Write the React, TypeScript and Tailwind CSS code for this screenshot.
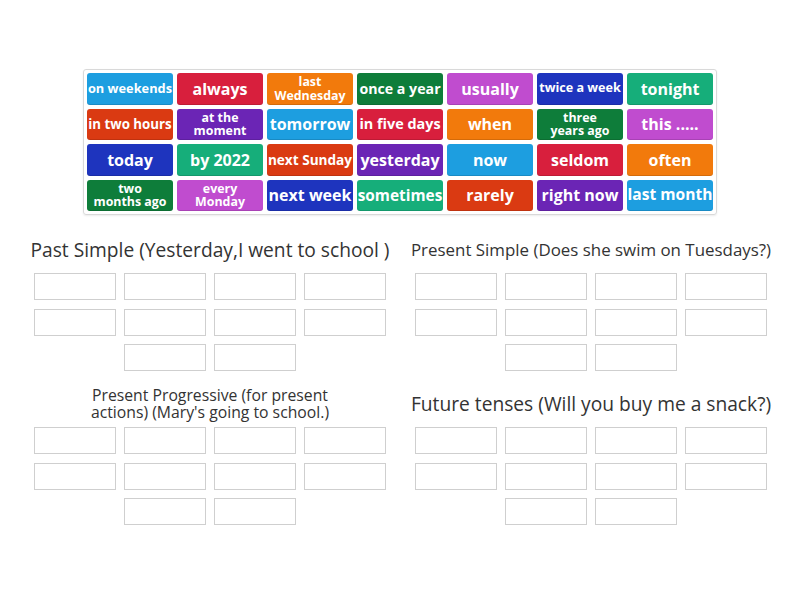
import React from "react";

type Tile = { text: string; size: number; two?: boolean };

const COLORS = [
  "bg-[#1d9ee0]",
  "bg-[#d81f3d]",
  "bg-[#f27a0c]",
  "bg-[#0e7d3a]",
  "bg-[#c04ccf]",
  "bg-[#1e34be]",
  "bg-[#16ae7a]",
  "bg-[#da3a12]",
  "bg-[#6b25b5]",
];

const TILES: Tile[] = [
  { text: "on weekends", size: 12.8 },
  { text: "always", size: 16 },
  { text: "last Wednesday", size: 12.4, two: true },
  { text: "once a year", size: 14.2 },
  { text: "usually", size: 16 },
  { text: "twice a week", size: 12.6 },
  { text: "tonight", size: 16 },
  { text: "in two hours", size: 13.3 },
  { text: "at the moment", size: 12.4, two: true },
  { text: "tomorrow", size: 16 },
  { text: "in five days", size: 14.4 },
  { text: "when", size: 16 },
  { text: "three years ago", size: 12.4, two: true },
  { text: "this .....", size: 16 },
  { text: "today", size: 16 },
  { text: "by 2022", size: 16 },
  { text: "next Sunday", size: 13.6 },
  { text: "yesterday", size: 16 },
  { text: "now", size: 16 },
  { text: "seldom", size: 16 },
  { text: "often", size: 16 },
  { text: "two months ago", size: 12.4, two: true },
  { text: "every Monday", size: 12.4, two: true },
  { text: "next week", size: 16 },
  { text: "sometimes", size: 15.4 },
  { text: "rarely", size: 16 },
  { text: "right now", size: 16 },
  { text: "last month", size: 15.6 },
];

const TWO_LINE: Record<string, [string, string]> = {
  "last Wednesday": ["last", "Wednesday"],
  "at the moment": ["at the", "moment"],
  "three years ago": ["three", "years ago"],
  "two months ago": ["two", "months ago"],
  "every Monday": ["every", "Monday"],
};

const Group = ({ title, size, twoLine }: { title: React.ReactNode; size: number; twoLine?: boolean }) => (
  <div className="flex flex-col">
    <div
      className={`h-[40px] flex items-center justify-center text-center text-[#333] whitespace-nowrap ${
        twoLine ? "leading-[17px]" : "leading-none"
      }`}
      style={{ fontSize: size }}
    >
      {title}
    </div>
    <div className="mt-[3px] flex flex-wrap justify-center">
      {Array.from({ length: 10 }).map((_, i) => (
        <div key={i} className="w-[90px] h-[35.5px] flex justify-center">
          <div className="w-[82px] h-[27px] border border-[#cfcfcf] bg-white" />
        </div>
      ))}
    </div>
  </div>
);

export default function App() {
  return (
    <div className="min-h-[600px] bg-white pt-[69px] font-['Open_Sans',sans-serif]">
      <div className="mx-auto w-[634px] border border-[#d9d9d9] rounded-[3px] p-[3px] shadow-[0_1px_2px_rgba(0,0,0,0.08)]">
        <div className="grid grid-cols-7 gap-x-[4px] gap-y-[4px]">
          {TILES.map((t, i) => (
            <div
              key={t.text}
              className={`${COLORS[i % 9]} h-[31.5px] rounded-[3px] flex flex-col items-center justify-center text-white font-bold text-center whitespace-nowrap shadow-[inset_0_-1px_0_rgba(0,0,0,0.12)]`}
              style={{ fontSize: t.size, lineHeight: t.two ? "13.5px" : "1" }}
            >
              {t.two ? (
                <>
                  <span>{TWO_LINE[t.text][0]}</span>
                  <span>{TWO_LINE[t.text][1]}</span>
                </>
              ) : (
                t.text
              )}
            </div>
          ))}
        </div>
      </div>

      <div className="ml-[30px] mt-[15px] grid grid-cols-[360px_360px] gap-x-[21px] gap-y-[4.5px]">
        <Group title="Past Simple (Yesterday,I went to school )" size={19.2} />
        <Group title="Present Simple (Does she swim on Tuesdays?)" size={16.9} />
        <Group
          title={
            <span>
              Present Progressive (for present
              <br />
              actions) (Mary's going to school.)
            </span>
          }
          size={15.75}
          twoLine
        />
        <Group title="Future tenses (Will you buy me a snack?)" size={19.2} />
      </div>
    </div>
  );
}
